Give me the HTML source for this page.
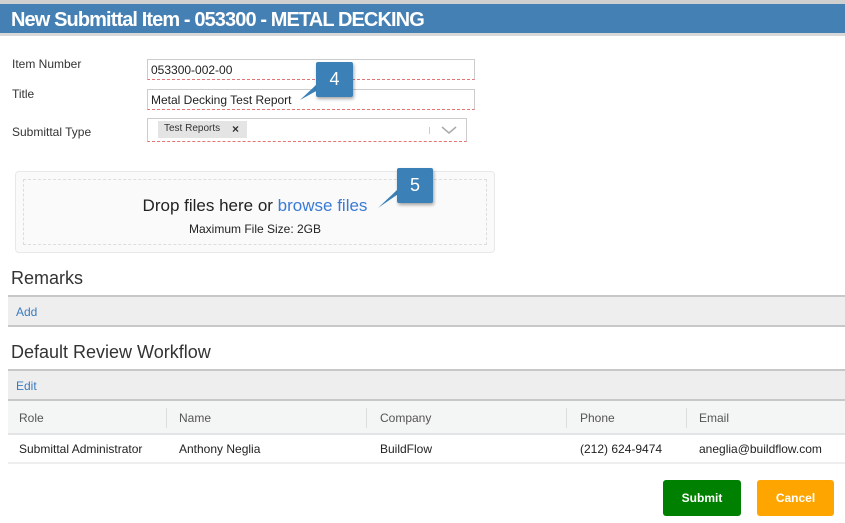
<!DOCTYPE html>
<html><head><meta charset="utf-8"><style>
*{box-sizing:border-box;margin:0;padding:0}
body{width:845px;height:523px;background:#fff;font-family:"Liberation Sans",sans-serif;position:relative;overflow:hidden;color:#222}
.a{position:absolute}
.hdr{left:0;top:0;width:845px;height:4px;background:#d0d0d0}
.bar{left:0;top:4px;width:845px;height:32px;background:#4580b4;border-bottom:3px solid #d8d8d8}
.bar span{position:absolute;left:11px;top:5px;color:#fff;font-weight:bold;font-size:20px;letter-spacing:-0.9px}
.lbl{font-size:12px;color:#333}
.inp{border:1px solid #ccc;border-bottom:1px dashed #e57373;font-size:12px;padding:3px 3px;background:#fff}
.gbar{left:8px;width:837px;height:32px;background:#eee;border-top:2px solid #c8c8c8;border-bottom:2px solid #c8c8c8}
.gbar span{position:absolute;left:8px;top:8px;font-size:12px;color:#3a7bbf}
.h2{font-size:18px;color:#333}
.th{font-size:12px;color:#555;top:411px}
.td{font-size:12px;color:#222;top:442px}
.sep{top:408px;width:1px;height:20px;background:#ddd}
.call{background:#3b80b6;color:#fff;font-size:18px;text-align:center;border-radius:2px;box-shadow:1px 2px 3px rgba(0,0,0,.35)}
</style></head><body>
<div class="a hdr"></div>
<div class="a bar"><span>New Submittal Item - 053300 - METAL DECKING</span></div>

<div class="a lbl" style="left:12px;top:57px">Item Number</div>
<div class="a lbl" style="left:12px;top:87px">Title</div>
<div class="a lbl" style="left:12px;top:125px">Submittal Type</div>
<div class="a inp" style="left:147px;top:59px;width:328px;height:21px">053300-002-00</div>
<div class="a inp" style="left:147px;top:89px;width:328px;height:21px">Metal Decking Test Report</div>
<div class="a inp" style="left:147px;top:118px;width:320px;height:24px;padding:0"></div>
<div class="a" style="left:158px;top:121px;width:89px;height:17px;background:#e4e4e4;font-size:10px;color:#333;padding:2px 6px">Test Reports<span style="position:absolute;left:74px;top:1px;font-weight:bold;font-size:12px">×</span></div>
<div class="a" style="left:429px;top:127px;width:1px;height:7px;background:#ccc"></div>
<svg class="a" style="left:441px;top:125px" width="16" height="10"><path d="M1 2 L8 8 L15 2" stroke="#aaa" stroke-width="1.5" fill="none"/></svg>

<div class="a" style="left:15px;top:171px;width:480px;height:82px;background:#fafafa;border:1px solid #e8e8e8;border-radius:4px"></div>
<div class="a" style="left:23px;top:179px;width:464px;height:66px;border:1px dashed #ddd"></div>
<div class="a" style="left:23px;top:196px;width:464px;text-align:center;font-size:17px;color:#222">Drop files here or <span style="color:#3a7bd5">browse files</span></div>
<div class="a" style="left:23px;top:222px;width:464px;text-align:center;font-size:12px;color:#222">Maximum File Size: 2GB</div>

<div class="a h2" style="left:11px;top:268px">Remarks</div>
<div class="a gbar" style="top:295px;left:8px"><span>Add</span></div>
<div class="a h2" style="left:11px;top:342px">Default Review Workflow</div>
<div class="a gbar" style="top:369px;left:8px"><span>Edit</span></div>
<div class="a" style="left:8px;top:401px;width:837px;height:34px;background:#f4f5f5;border-bottom:2px solid #e2e4e6"></div>
<div class="a" style="left:8px;top:462px;width:837px;height:2px;background:#eee"></div>
<div class="a sep" style="left:166px"></div><div class="a sep" style="left:366px"></div><div class="a sep" style="left:566px"></div><div class="a sep" style="left:686px"></div>
<div class="a th" style="left:19px">Role</div><div class="a th" style="left:179px">Name</div><div class="a th" style="left:380px">Company</div><div class="a th" style="left:580px">Phone</div><div class="a th" style="left:699px">Email</div>
<div class="a td" style="left:19px">Submittal Administrator</div><div class="a td" style="left:179px">Anthony Neglia</div><div class="a td" style="left:380px">BuildFlow</div><div class="a td" style="left:580px">(212) 624-9474</div><div class="a td" style="left:699px">aneglia@buildflow.com</div>

<div class="a" style="left:663px;top:480px;width:78px;height:36px;background:#008000;border-radius:3px;color:#fff;font-size:12px;font-weight:bold;text-align:center;line-height:36px">Submit</div>
<div class="a" style="left:757px;top:480px;width:77px;height:36px;background:#ffa500;border-radius:3px;color:#fff;font-size:12px;font-weight:bold;text-align:center;line-height:36px">Cancel</div>

<svg class="a" style="left:295px;top:85px" width="40" height="20"><path d="M21 0 L32 0 L5 15 Z" fill="#3b80b6"/></svg>
<div class="a call" style="left:316px;top:62px;width:37px;height:35px;line-height:35px">4</div>
<svg class="a" style="left:374px;top:190px" width="40" height="20"><path d="M23 0 L30 0 L4 18 Z" fill="#3b80b6"/></svg>
<div class="a call" style="left:397px;top:168px;width:36px;height:35px;line-height:35px">5</div>
</body></html>
